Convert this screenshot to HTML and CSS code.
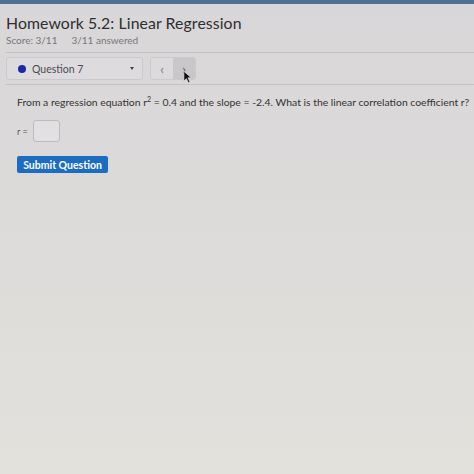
FILE: index.html
```html
<!DOCTYPE html>
<html>
<head>
<meta charset="utf-8">
<link rel="stylesheet" href="styles.css">
</head>
<body>
<div class="topbar"></div>
<div class="page">
  <header class="head">
    <h1 class="title">Homework 5.2: Linear Regression</h1>
    <div class="score"><span>Score: 3/11</span><span>3/11 answered</span></div>
  </header>
  <div class="navrow">
    <div class="qselect">
      <span class="dot"></span>
      <span class="qlabel">Question 7</span>
      <span class="caret"></span>
    </div>
    <div class="navbtns">
      <span class="nb">&lsaquo;</span>
      <span class="nb hover">&rsaquo;</span>
    </div>
  </div>
  <main class="question">
    <p class="qtext">From a regression equation r<sup>2</sup> = 0.4 and the slope = -2.4. What is the linear correlation coefficient r?</p>
    <div class="answer"><span>r =</span><span class="box"></span></div>
    <button class="submit">Submit Question</button>
  </main>
</div>
<svg class="cursor" width="10" height="14" viewBox="0 0 12 16"><path d="M1 1 L1 13 L4 10 L6.5 15 L8.5 14 L6 9 L10 9 Z" fill="#111" stroke="#eee" stroke-width="0.8"/></svg>
</body>
</html>
```
FILE: styles.css
```css
html, body { margin: 0; padding: 0; }
body {
  width: 474px; height: 474px; overflow: hidden; position: relative;
  background: linear-gradient(180deg, #d8d6d8 0%, #dcdad9 40%, #e3e1dc 100%);
  font-family: Lato, "Open Sans", sans-serif;
  color: #333;
}
.topbar { height: 4px; background: #4f6f96; }
.page { padding: 0 0 0 6px; }
.head { border-bottom: 1px solid #c4c2c4; padding-bottom: 5px; }
.title { margin: 0; padding-top: 9px; font-size: 15.8px; font-weight: 400; color: #2e2e30; letter-spacing: 0.1px; line-height: 20px; }
.score { font-size: 10px; color: #77767a; display: flex; gap: 14px; line-height: 14px; margin-top: 0; }
.navrow { display: flex; gap: 7px; padding: 4px 0 4px 0; border-bottom: 1px solid #c4c2c4; }
.qselect {
  width: 137px; height: 23px; box-sizing: border-box; border: 1px solid #cbc9cb; border-radius: 3px;
  background: #dddbdd; display: flex; align-items: center; padding: 0 8px 0 11px;
}
.dot { width: 8px; height: 8px; border-radius: 50%; background: #1e27a8; margin-right: 6px; }
.qlabel { font-size: 10.5px; color: #4a4a55; flex: 1; }
.caret { width: 0; height: 0; border-left: 2.5px solid transparent; border-right: 2.5px solid transparent; border-top: 3px solid #444; }
.navbtns { display: flex; border: 1px solid #cbc9cb; border-radius: 3px; overflow: hidden; height: 23px; box-sizing: border-box; }
.nb { width: 22px; display: flex; align-items: center; justify-content: center; font-size: 13px; color: #777; background: #dcdadc; }
.nb.hover { background: #c9c7c9; color: #555; }
.question { padding: 10px 0 0 11px; }
.qtext { margin: 0; font-size: 10.4px; color: #333; line-height: 14px; white-space: nowrap; }
.qtext sup { font-size: 7px; line-height: 0; }
.answer { display: flex; align-items: center; gap: 5px; margin-top: 11px; font-size: 9px; color: #555; }
.box { width: 25px; height: 20px; border: 1px solid #bdbbbd; border-radius: 3px; background: #e2e0e2; }
.submit {
  margin-top: 14px; display: block; background: #1c6dc2; color: #fff; border: none; border-radius: 2px;
  font-family: Lato, sans-serif; font-weight: 700; font-size: 10.5px; height: 17px; width: 91px; padding: 0;
}
.cursor { position: absolute; left: 183px; top: 70px; }
```
